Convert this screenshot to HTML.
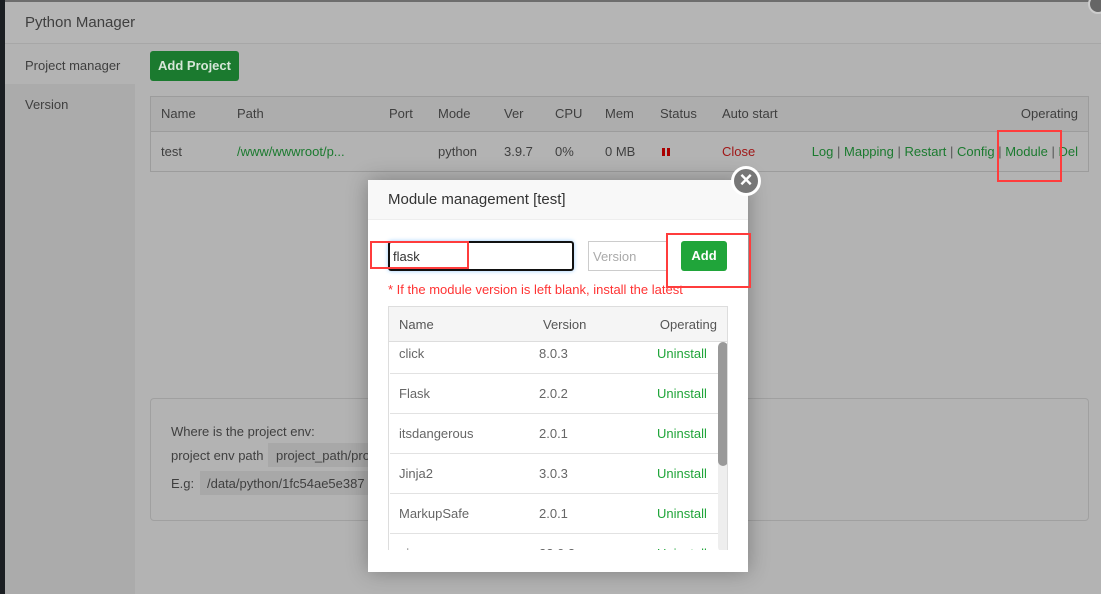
<!DOCTYPE html>
<html><head><meta charset="utf-8"><style>
*{box-sizing:border-box;margin:0;padding:0}
body{width:1101px;height:594px;overflow:hidden;position:relative;background:#1b1e22;font-family:"Liberation Sans",sans-serif;font-size:13px;color:#3f3f3f}
.a{position:absolute}
.panel{left:5px;top:2px;width:1096px;height:592px;background:#b3b3b3}
.topbar{left:5px;top:0;width:1096px;height:2px;background:#6d6d6d}
.hdr{left:5px;top:2px;width:1096px;height:42px;background:#b5b5b5;border-bottom:1px solid #a7a7a7}
.side{left:5px;top:84px;width:130px;height:510px;background:#ababab}
.tbl{left:150px;top:96px;width:939px;height:76px;border:1px solid #9c9c9c}
.tbl .h{position:absolute;left:0;top:0;width:100%;height:35px;background:#adadad;border-bottom:1px solid #9c9c9c}
.t{position:absolute;white-space:nowrap}
.g{color:#1b7a2f}
.modal{left:368px;top:180px;width:380px;height:392px;background:#fff;box-shadow:0 0 20px rgba(0,0,0,.3)}
.mh{left:0;top:0;width:380px;height:40px;background:#f8f8f8;border-bottom:1px solid #eee}
.red{position:absolute;border:2px solid #ff3c3c}
.row{position:absolute;left:1px;width:328px;height:40px;border-bottom:1px solid #e2e2e2}
.row span{position:absolute;top:12px;color:#666}
.row .u{left:267px;color:#20a53a}
</style></head><body>
<div class="a panel"></div>
<div class="a topbar"></div>
<div class="a hdr"><div class="t" style="left:20px;top:12px;font-size:15px;color:#3f3f3f">Python Manager</div></div>
<div class="a side"></div>
<div class="t" style="left:25px;top:58px">Project manager</div>
<div class="t" style="left:25px;top:97px">Version</div>
<div class="a" style="left:150px;top:51px;width:89px;height:30px;background:#1b7a2f;border-radius:3px;color:#d6e6d8;font-weight:bold;text-align:center;line-height:30px">Add Project</div>
<div class="a tbl">
<div class="h"></div>
<div class="t" style="left:10px;top:9px">Name</div><div class="t" style="left:86px;top:9px">Path</div><div class="t" style="left:238px;top:9px">Port</div><div class="t" style="left:287px;top:9px">Mode</div><div class="t" style="left:353px;top:9px">Ver</div><div class="t" style="left:404px;top:9px">CPU</div><div class="t" style="left:454px;top:9px">Mem</div><div class="t" style="left:509px;top:9px">Status</div><div class="t" style="left:571px;top:9px">Auto start</div><div class="t" style="right:10px;top:9px">Operating</div>
<div class="t" style="left:10px;top:47px">test</div><div class="t g" style="left:86px;top:47px">/www/wwwroot/p...</div><div class="t" style="left:287px;top:47px">python</div><div class="t" style="left:353px;top:47px">3.9.7</div><div class="t" style="left:404px;top:47px">0%</div><div class="t" style="left:454px;top:47px">0 MB</div>
<div class="a" style="left:511px;top:51px;width:3px;height:8px;background:#a00"></div><div class="a" style="left:516px;top:51px;width:3px;height:8px;background:#a00"></div>
<div class="t" style="left:571px;top:47px;color:#a01818">Close</div>
<div class="t g" style="right:10px;top:47px">Log <span style="color:#555">|</span> Mapping <span style="color:#555">|</span> Restart <span style="color:#555">|</span> Config <span style="color:#555">|</span> Module <span style="color:#555">|</span> Del</div>
</div>
<div class="red" style="left:997px;top:130px;width:65px;height:52px"></div>
<div class="a" style="left:150px;top:398px;width:939px;height:123px;border:1px solid #a0a0a0;border-radius:4px"></div>
<div class="t" style="left:171px;top:424px">Where is the project env:</div>
<div class="a" style="left:268px;top:443px;width:100px;height:24px;background:#a8a8a8"></div>
<div class="t" style="left:171px;top:448px">project env path</div>
<div class="t" style="left:276px;top:448px">project_path/pro</div>
<div class="a" style="left:200px;top:471px;width:168px;height:24px;background:#a8a8a8"></div>
<div class="t" style="left:171px;top:476px">E.g:</div>
<div class="t" style="left:207px;top:476px">/data/python/1fc54ae5e387</div>
<div class="a modal">
<div class="a mh"><div class="t" style="left:20px;top:11px;font-size:15px;color:#333">Module management [test]</div></div>
<div class="a" style="left:20px;top:61px;width:186px;height:30px;border:2px solid #111;border-radius:3px;box-shadow:0 0 4px #9cf"></div>
<div class="t" style="left:25px;top:69px;color:#333">flask</div>
<div class="a" style="left:220px;top:61px;width:80px;height:30px;border:1px solid #ccc"></div>
<div class="t" style="left:225px;top:69px;color:#aaa">Version</div>
<div class="a" style="left:313px;top:61px;width:46px;height:30px;background:#20a53a;border-radius:3px;color:#fff;font-weight:bold;text-align:center;line-height:30px">Add</div>
<div class="t" style="left:20px;top:102px;color:#f33">* If the module version is left blank, install the latest</div>
<div class="a" style="left:20px;top:126px;width:340px;height:245px;border:1px solid #ddd;border-bottom:none;overflow:hidden">
<div class="a" style="left:0;top:0;width:340px;height:35px;background:#f5f5f5;border-bottom:1px solid #ddd"></div>
<div class="t" style="left:10px;top:10px;color:#555">Name</div><div class="t" style="left:154px;top:10px;color:#555">Version</div><div class="t" style="right:10px;top:10px;color:#555">Operating</div>
<div class="row" style="top:27px"><span style="left:9px">click</span><span style="left:149px">8.0.3</span><span class="u">Uninstall</span></div>
<div class="row" style="top:67px"><span style="left:9px">Flask</span><span style="left:149px">2.0.2</span><span class="u">Uninstall</span></div>
<div class="row" style="top:107px"><span style="left:9px">itsdangerous</span><span style="left:149px">2.0.1</span><span class="u">Uninstall</span></div>
<div class="row" style="top:147px"><span style="left:9px">Jinja2</span><span style="left:149px">3.0.3</span><span class="u">Uninstall</span></div>
<div class="row" style="top:187px"><span style="left:9px">MarkupSafe</span><span style="left:149px">2.0.1</span><span class="u">Uninstall</span></div>
<div class="row" style="top:227px"><span style="left:9px">pip</span><span style="left:149px">22.0.3</span><span class="u">Uninstall</span></div>
<div class="a" style="left:329px;top:35px;width:10px;height:210px;background:#eee;border-radius:5px"></div>
<div class="a" style="left:329px;top:35px;width:10px;height:124px;background:#999;border-radius:5px"></div>
</div>
<div class="a" style="left:0;top:370px;width:380px;height:22px;background:#fff"></div>
</div>
<div class="a" style="left:731px;top:166px;width:30px;height:30px;border-radius:50%;background:#777;border:3px solid #fff;color:#fff;font-size:22px;font-weight:bold;text-align:center;line-height:22px">×</div>
<div class="red" style="left:370px;top:241px;width:99px;height:28px"></div>
<div class="red" style="left:666px;top:233px;width:85px;height:55px"></div>
<div class="a" style="left:1088px;top:-6px;width:20px;height:20px;border-radius:50%;background:#666;border:2px solid #ccc"></div>
</body></html>
